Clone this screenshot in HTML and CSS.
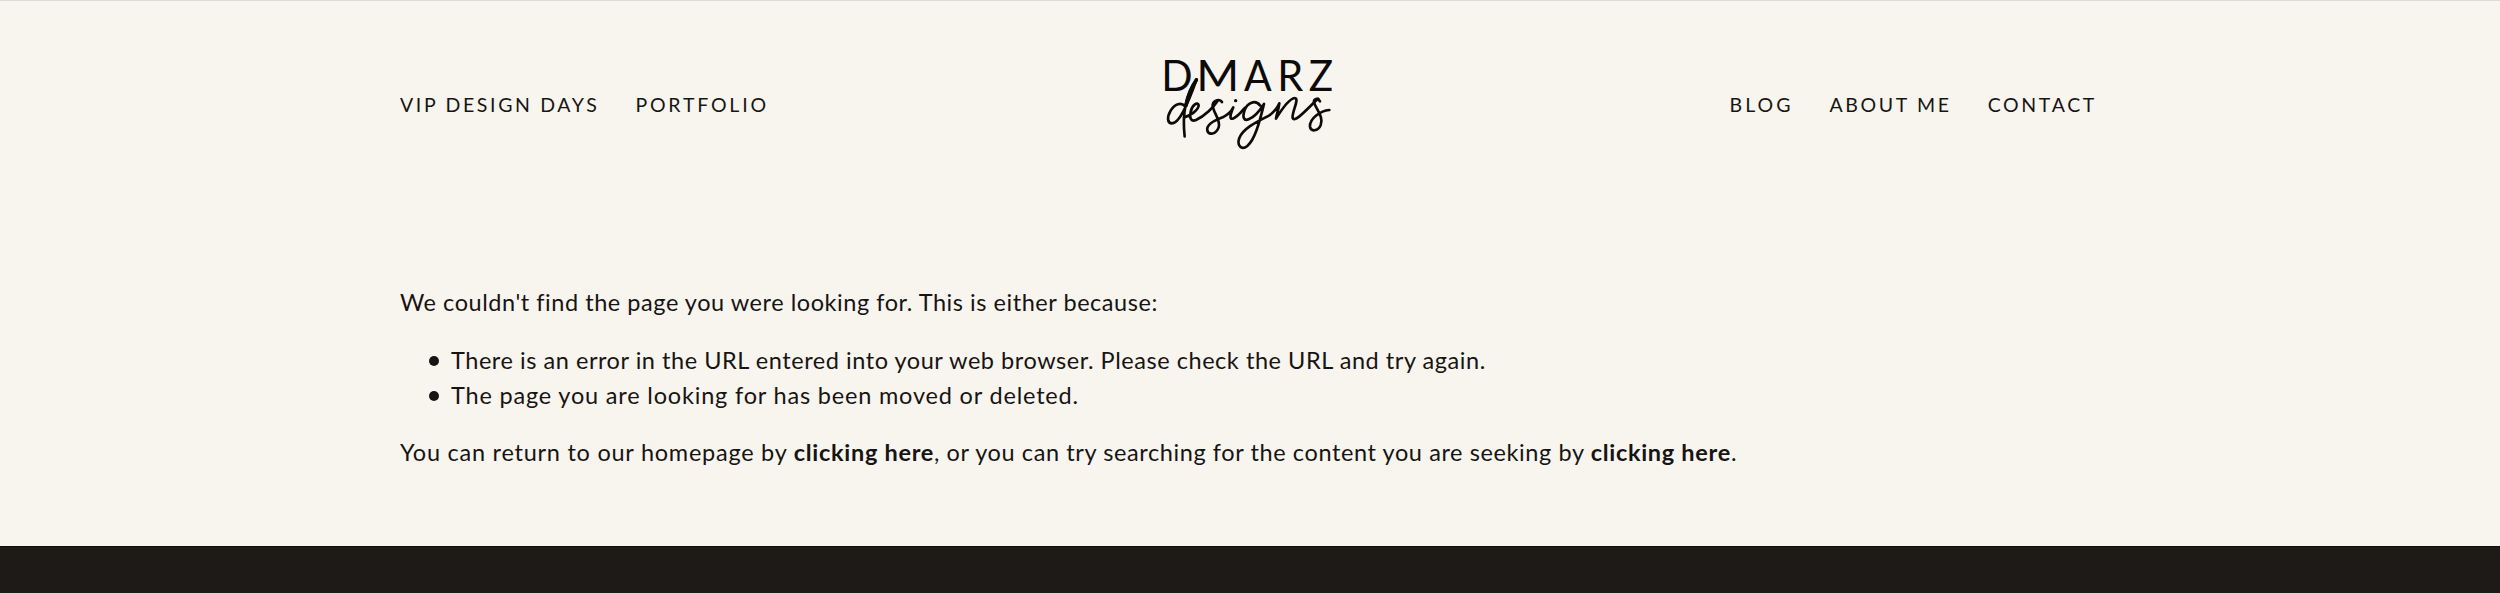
FILE: index.html
```html
<!DOCTYPE html>
<html lang="en">
<head>
<meta charset="utf-8">
<title>DMARZ designs</title>
<link rel="stylesheet" href="styles.css">
</head>
<body>
<header class="header">
  <nav class="nav">
    <a class="nav-link vip" href="#">VIP DESIGN DAYS</a>
    <a class="nav-link portfolio" href="#">PORTFOLIO</a>
  </nav>
  <a class="logo" href="#">
    <svg viewBox="0 0 660 390" width="220" height="130" role="img" aria-label="DMARZ designs">
      <g class="logo-caps">
        <text x="64" y="153" textLength="94" lengthAdjust="spacingAndGlyphs">D</text>
        <text x="169" y="153" textLength="129" lengthAdjust="spacingAndGlyphs">M</text>
        <text x="312" y="153" textLength="83" lengthAdjust="spacingAndGlyphs">A</text>
        <text x="412" y="153" textLength="78" lengthAdjust="spacingAndGlyphs">R</text>
        <text x="506" y="153" textLength="73" lengthAdjust="spacingAndGlyphs">Z</text>
      </g>
      <g class="logo-script">
        <path d="M134 198C124 186 104 192 92 212C80 232 82 250 96 250C116 250 140 202 170 118C140 160 126 220 134 289"/>
        <path class="stem" d="M169 120C154 142 144 166 138 196"/>
        <path d="M132 232C150 228 176 210 176 196C174 184 156 194 152 216C148 236 154 246 168 240C194 228 222 200 232 184"/>
        <path d="M246 186C240 176 222 180 218 194C216 214 244 240 236 262C228 284 206 286 202 272C198 254 226 240 248 232C264 224 274 214 280 202C270 226 268 238 278 236C292 232 304 216 314 204"/>
        <path d="M360 196C346 178 322 188 314 210C306 232 312 244 326 238C346 230 362 208 372 192C362 230 348 296 322 318C304 332 290 316 298 294C310 262 362 240 388 226C402 216 412 204 418 190C416 208 410 222 408 236C424 210 448 176 464 174C480 174 454 220 458 234C464 250 502 206 534 176"/>
        <path d="M540 184C534 172 520 176 522 188C530 210 552 232 542 256C534 274 512 276 510 260C508 236 542 212 568 210"/>
        <circle class="dot" cx="287" cy="182" r="5"/>
      </g>
    </svg>
  </a>
  <nav class="nav nav-right">
    <a class="nav-link blog" href="#">BLOG</a>
    <a class="nav-link about" href="#">ABOUT ME</a>
    <a class="nav-link contact" href="#">CONTACT</a>
  </nav>
</header>
<main class="content">
  <p class="intro">We couldn't find the page you were looking for. This is either because:</p>
  <ul class="reasons">
    <li><span class="reason-url">There is an error in the URL entered into your web browser. Please check the URL and try again.</span></li>
    <li><span class="reason-moved">The page you are looking for has been moved or deleted.</span></li>
  </ul>
  <p class="help"><span class="help-home">You can return to our homepage by </span><a href="#">clicking here</a>, or you can try searching for the content you are seeking by <a href="#">clicking here</a>.</p>
</main>
<footer class="footer"></footer>
</body>
</html>
```
FILE: styles.css
```css
* { box-sizing: border-box; }
body {
  margin: 0;
  height: 593px;
  display: flex;
  flex-direction: column;
  background: #f8f5ee;
  border-top: 1px solid #dcdcd7;
  color: #171414;
  font-family: Lato, "Open Sans", sans-serif;
}
a { color: inherit; text-decoration: none; }
.header {
  width: 1700px;
  height: 205px;
  margin: 0 auto;
  display: grid;
  grid-template-columns: 740px 220px 740px;
}
.nav { display: flex; gap: 36px; padding-top: 92px; }
.nav-right { justify-content: flex-end; padding-right: 3px; }
.nav-link {
  font-size: 19.5px;
  line-height: 24px;
  font-weight: 400;
  letter-spacing: 2.65px;
  white-space: nowrap;
}
.portfolio { letter-spacing: 2.8px; }
.blog { letter-spacing: 3px; }
.logo { padding-top: 39px; }
.logo svg { display: block; }
.logo-caps { font-size: 129px; fill: #0c0b0a; }
.logo-script { fill: none; stroke: #0c0b0a; stroke-width: 8; stroke-linecap: round; stroke-linejoin: round; }
.logo-script .stem { stroke-width: 11; }
.logo-script .dot { fill: #0c0b0a; stroke: none; }
.content {
  width: 1700px;
  margin: 0 auto;
  padding-top: 79px;
  flex: 1;
  font-size: 23.5px;
  line-height: 35px;
  letter-spacing: 0.55px;
  white-space: nowrap;
}
.content p { margin: 0; }
.content a { font-weight: 700; letter-spacing: 0.7px; }
.reason-moved { letter-spacing: 0.82px; }
.content .help { letter-spacing: 0.6px; }
.help-home { letter-spacing: 0.75px; }
.reasons { margin: 23px 0 22px; padding: 0 0 0 51px; list-style: none; }
.reasons li { display: flex; align-items: center; height: 35px; }
.reasons li::before {
  content: "";
  width: 10px;
  height: 10px;
  margin: 0 12px 0 -22px;
  border-radius: 50%;
  background: #171414;
}
.footer { height: 47px; background: #1e1a18; border-top: 1px solid #0f0c0b; }
```
